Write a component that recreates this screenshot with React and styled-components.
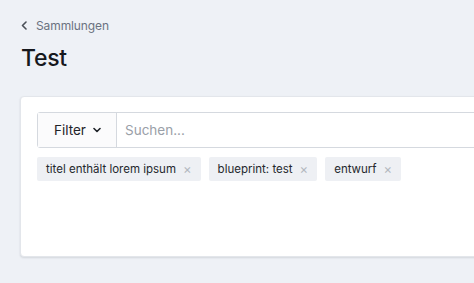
import React from 'react';
import styled, { createGlobalStyle } from 'styled-components';

const GlobalStyle = createGlobalStyle`
    html, body {
        margin: 0;
        padding: 0;
        background: #eef1f6;
        overflow: hidden;
    }

    body {
        font-family: Inter, "Noto Sans", sans-serif;
        -webkit-font-smoothing: antialiased;
    }
`;

const Page = styled.div`
    display: flex;
    flex-direction: column;
    width: 540px;
    height: 283px;
    padding: 16px 0 0 20px;
    box-sizing: border-box;
`;

const BackLink = styled.a`
    display: flex;
    align-items: center;
    gap: 9px;
    font-size: 12px;
    letter-spacing: -0.1px;
    color: #6b7280;
    text-decoration: none;
    height: 18px;

    & svg {
        margin-left: 1px;
    }
`;

const Title = styled.h1`
    margin: 9px 0 0 1px;
    font-size: 23px;
    font-weight: 500;
    color: #16181d;
    letter-spacing: -0.3px;
    line-height: 30px;
`;

const Card = styled.section`
    margin-top: 23px;
    height: 161px;
    box-sizing: border-box;
    padding: 15px 16px;
    background: #fff;
    border: 1px solid #e3e6eb;
    border-radius: 4px;
    box-shadow: 0 1px 2px rgba(15, 23, 42, 0.12);
    display: flex;
    flex-direction: column;
    gap: 8px;
`;

const SearchBar = styled.div`
    display: flex;
    height: 36px;
    border: 1px solid #d5d9df;
    border-radius: 3px;
    box-sizing: border-box;
`;

const FilterButton = styled.button`
    display: flex;
    align-items: center;
    gap: 7px;
    padding: 0 15px 0 16px;
    width: 79px;
    border: none;
    border-right: 1px solid #d5d9df;
    background: #fbfbfc;
    font-family: inherit;
    font-size: 13.5px;
    color: #1f2329;
`;

const SearchInput = styled.input`
    flex: 1;
    border: none;
    outline: none;
    padding: 0 8px;
    font-family: inherit;
    font-size: 13.5px;
    background: transparent;

    &::placeholder {
        color: #9aa0a8;
    }
`;

const TagList = styled.div`
    display: flex;
    gap: 8px;
    margin-top: 1px;
`;

const Tag = styled.span`
    display: flex;
    align-items: center;
    gap: 7px;
    height: 24px;
    padding: 0 9px 0 9px;
    background: #eef0f4;
    border-radius: 2px;
    font-size: 11.5px;
    color: #25282d;
`;

const Remove = styled.span`
    color: #b3b8bf;
    font-size: 13px;
    line-height: 1;
`;

const tags = ['titel enthält lorem ipsum', 'blueprint: test', 'entwurf'];

const App = () => (
    <>
        <GlobalStyle />
        <Page>
            <BackLink href="#">
                <svg width="6" height="9" viewBox="0 0 6 9" fill="none">
                    <path d="M5 1 1.5 4.5 5 8" stroke="#4b5058" strokeWidth="1.6" strokeLinecap="round" strokeLinejoin="round" />
                </svg>
                Sammlungen
            </BackLink>
            <Title>Test</Title>

            <Card>
                <SearchBar>
                    <FilterButton>
                        Filter
                        <svg width="8" height="6" viewBox="0 0 8 6" fill="none">
                            <path d="M1 1.5 4 4.5 7 1.5" stroke="#1f2329" strokeWidth="1.6" strokeLinecap="round" strokeLinejoin="round" />
                        </svg>
                    </FilterButton>
                    <SearchInput placeholder="Suchen..." />
                </SearchBar>

                <TagList>
                    { tags.map(tag => (
                        <Tag key={ tag }>
                            { tag }
                            <Remove>×</Remove>
                        </Tag>
                    )) }
                </TagList>
            </Card>
        </Page>
    </>
);

export default App;
